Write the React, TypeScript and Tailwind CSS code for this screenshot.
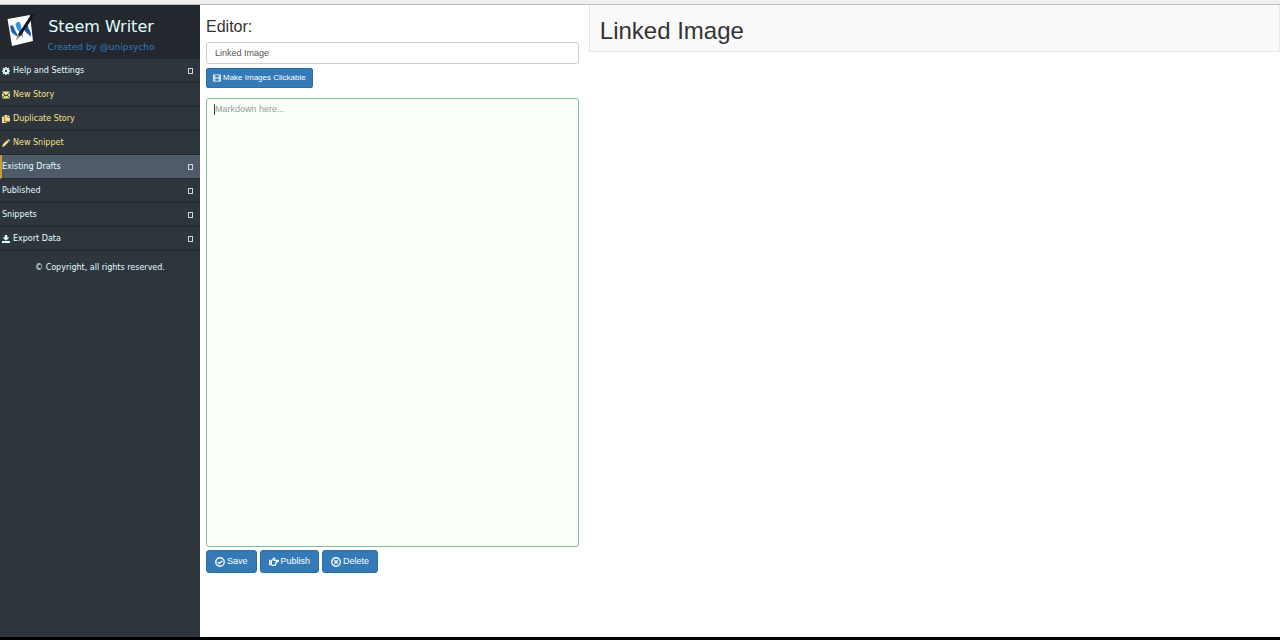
import { useState } from "react";
import type { ReactNode } from "react";

type IconName =
  | "cog"
  | "envelope"
  | "duplicate"
  | "pencil"
  | "download"
  | "film"
  | "ok"
  | "hand"
  | "remove";

const shapes: Record<IconName, ReactNode> = {
  cog: (
    <>
      <circle cx="8" cy="8" r="4" fill="none" stroke="currentColor" strokeWidth="3.4" />
      <path
        d="M8 0v3.5M8 12.5V16M0 8h3.5M12.5 8H16M2.3 2.3l2.5 2.5M11.2 11.2l2.5 2.5M13.7 2.3l-2.5 2.5M4.8 11.2l-2.5 2.5"
        stroke="currentColor"
        strokeWidth="3.2"
      />
    </>
  ),
  envelope: (
    <path d="M0 1h16L8 8.8zM0 3.4l4.8 4.8L0 13zM16 3.4V13l-4.800-4.800zM5.800 9.300 8 11.200l2.200-1.900L16 15H0z" />
  ),
  duplicate: (
    <>
      <path d="M0 3h4v11h5v2H0z" />
      <path d="M5 0h6v5h5v8H5z" />
      <path d="M12 0l4 4h-4z" />
    </>
  ),
  pencil: <path d="M12.5 0 16 3.5l-1.8 1.8-3.5-3.5zM9.8 2.7l3.5 3.5-8 8L0 16l1.8-5.3z" />,
  download: <path d="M5.500 0h5v5H15l-7 6.500L1 5h4.500zM0 12h16v4H0z" />,
  film: (
    <path
      fillRule="evenodd"
      d="M0 1h16v14H0zM1.3 2.5v2h1.8v-2zm0 4v2h1.8v-2zm0 4v2.5h1.8v-2.5zM12.9 2.5v2h1.8v-2zm0 4v2h1.8v-2zm0 4v2.5h1.8v-2.5zM4.5 2.5v4.7h7V2.5zm0 6.3v4.7h7V8.8z"
    />
  ),
  ok: (
    <g fill="none" stroke="currentColor" strokeWidth="2.1">
      <circle cx="8" cy="8" r="6.8" />
      <path d="m4.4 7.8 2.7 2.7L11.8 6" />
    </g>
  ),
  hand: (
    <>
      <path d="M0 4.500h2.800v8.500H0z" />
      <path
        d="M4 12.400V6.200L7.600 2c1.400-.8 2 .4 1.400 1.600L8.200 5.400h6.200c1.400 0 1.400 2 0 2H11c1.400.4 1.200 2-.2 2.200.8.6.6 1.800-.4 2 .4 1-.2 1.800-1.400 1.800H5.400z"
        fill="none"
        stroke="currentColor"
        strokeWidth="1.700"
      />
    </>
  ),
  remove: (
    <g fill="none" stroke="currentColor" strokeWidth="2.1">
      <circle cx="8" cy="8" r="6.8" />
      <path d="m5.3 5.3 5.4 5.4M10.7 5.3l-5.4 5.4" />
    </g>
  ),
};

function Icon({ name, className }: { name: IconName; className: string }) {
  return (
    <svg viewBox="0 0 16 16" fill="currentColor" aria-hidden="true" className={className}>
      {shapes[name]}
    </svg>
  );
}

function Logo() {
  return (
    <svg viewBox="0 0 32 36" aria-hidden="true" className="h-9 w-8">
      <path d="M1.500 6 24 2l3 26L6 33z" fill="#fdfdfd" />
      <path d="M4 13c3-2 4 1 4.500 3s3 4 3.500 9c-1.500-3-6-4-7-7z" fill="#2263ad" />
      <path d="M9.500 11c3-4 5-2 5.500 2s3 6 1.500 12c-1-5-6-7-7-14z" fill="#3c8fe0" />
      <path d="M18 12c4-1 4 1 4.500 3s3.500 4 2 9c-1-3-5.500-4-6.500-8z" fill="#1d56a3" />
      <path d="M24.500 2.500 27 4.500 14.500 23l-4 3.500 1.500-5z" fill="#15181c" />
      <path d="m11.800 21.500 2.200 1.500-4 4.500z" fill="#b59b62" />
      <path d="m24 4 4.500-2.500M25 6l3 1" stroke="#15181c" strokeWidth="1.200" />
    </svg>
  );
}

type MenuItem = {
  label: string;
  icon?: IconName;
  expandable?: boolean;
  highlight?: boolean;
};

const menu: MenuItem[] = [
  { label: "Help and Settings", icon: "cog", expandable: true },
  { label: "New Story", icon: "envelope", highlight: true },
  { label: "Duplicate Story", icon: "duplicate", highlight: true },
  { label: "New Snippet", icon: "pencil", highlight: true },
  { label: "Existing Drafts", expandable: true },
  { label: "Published", expandable: true },
  { label: "Snippets", expandable: true },
  { label: "Export Data", icon: "download", expandable: true },
];

function Sidebar() {
  const [active, setActive] = useState("Existing Drafts");

  return (
    <aside className="w-[200px] shrink-0 bg-[#2e353d] font-['DejaVu_Sans',Verdana,sans-serif] text-[8px] text-[#e1ffff]">
      <header className="grid h-[54px] grid-cols-[40px_1fr_38px] bg-[#23282e]">
        <div className="pt-2 pl-1.5">
          <Logo />
        </div>
        <div className="pt-3 text-center whitespace-nowrap">
          <h1 className="text-[16px] leading-5">Steem Writer</h1>
          <a href="#author" className="-mx-2 block text-[9px] leading-5 text-[#337ab7]">
            Created by @unipsycho
          </a>
        </div>
      </header>
      <nav>
        <ul>
          {menu.map((item) => (
            <li key={item.label}>
              <button
                type="button"
                onClick={() => setActive(item.label)}
                className={[
                  "flex h-6 w-full items-center gap-[3px] border-b border-b-[#23282e] pr-[7px] text-left",
                  item.highlight ? "text-[#f5e08a]" : "",
                  active === item.label
                    ? "border-l-2 border-l-[#d19b3d] bg-[#4f5b69]"
                    : "pl-0.5",
                ].join(" ")}
              >
                {item.icon && <Icon name={item.icon} className="size-2" />}
                <span className="flex-1">{item.label}</span>
                {item.expandable && <span className="h-[6px] w-[5px] border border-[#c3dcdf]" />}
              </button>
            </li>
          ))}
        </ul>
      </nav>
      <p className="pt-[11px] text-center leading-3">© Copyright, all rights reserved.</p>
    </aside>
  );
}

function ActionButton({ icon, label }: { icon: IconName; label: string }) {
  return (
    <button
      type="button"
      className="flex h-[23px] items-center gap-0.5 rounded-[3px] border border-[#2e6da4] bg-[#337ab7] px-2 text-[9px] text-white"
    >
      <Icon name={icon} className="size-[10px]" />
      {label}
    </button>
  );
}

export default function App() {
  const [title, setTitle] = useState("Linked Image");
  const [body, setBody] = useState("");

  return (
    <div className="flex min-h-screen flex-col bg-white font-['Liberation_Sans',Arial,sans-serif] text-[#333333]">
      <div className="h-[5px] border-b border-[#bcbcbc] bg-[#f0f0f0]" />
      <div className="flex flex-1">
        <Sidebar />
        <main className="grid flex-1 grid-cols-[9fr_16fr]">
          <section className="flex flex-col pt-3 pr-[10px] pl-1.5">
            <label htmlFor="title" className="text-[16px] leading-5">
              Editor:
            </label>
            <input
              id="title"
              value={title}
              onChange={(event) => setTitle(event.target.value)}
              className="mt-[5px] h-[22px] rounded-[3px] border border-[#cccccc] px-2 text-[9px] text-[#555555] outline-none"
            />
            <button
              type="button"
              className="mt-1 flex h-5 items-center gap-0.5 self-start rounded-[2px] border border-[#2e6da4] bg-[#337ab7] px-1.5 text-[8px] text-white"
            >
              <Icon name="film" className="size-2" />
              Make Images Clickable
            </button>
            <div className="relative mt-[10px] flex">
              <textarea
                aria-label="Markdown"
                value={body}
                onChange={(event) => setBody(event.target.value)}
                placeholder="Markdown here..."
                className="h-[449px] w-full resize-none rounded-[3px] border border-[#7fbf9b] bg-[#fafffa] px-2 py-1 text-[9px] leading-3 text-[#555555] outline-none placeholder:text-[#999999]"
              />
              {body === "" && <span className="absolute top-[6px] left-2 h-[11px] w-px bg-[#444444]" />}
            </div>
            <div className="mt-[3px] flex gap-[3px]">
              <ActionButton icon="ok" label="Save" />
              <ActionButton icon="hand" label="Publish" />
              <ActionButton icon="remove" label="Delete" />
            </div>
          </section>
          <section>
            <div className="border border-t-0 border-[#e7e7e7] bg-[#fafafa] px-[10px] pt-3 pb-1.5">
              <h2 className="text-[24px] leading-7">{title}</h2>
            </div>
          </section>
        </main>
      </div>
      <div className="h-[3px] bg-black" />
    </div>
  );
}
